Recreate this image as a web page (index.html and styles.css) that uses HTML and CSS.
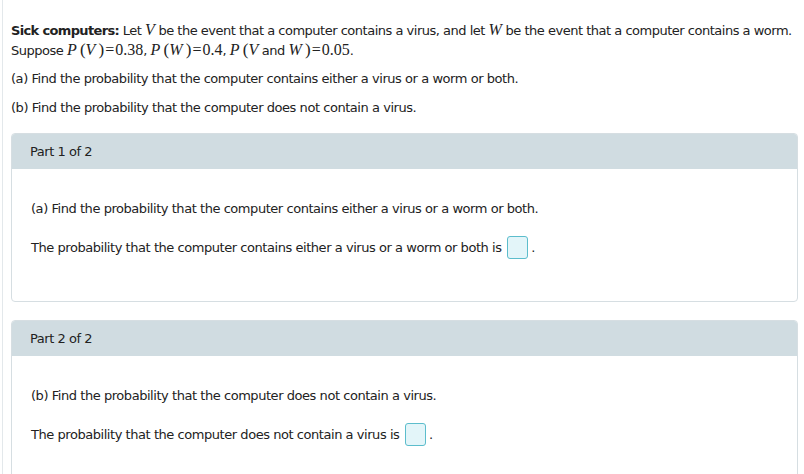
FILE: index.html
```html
<!DOCTYPE html>
<html>
<head>
<meta charset="utf-8">
<link rel="stylesheet" href="styles.css">
</head>
<body>
<div class="page">
  <div class="problem">
    <p class="intro"><b>Sick computers:</b> Let <span class="m i">V</span> be the event that a computer contains a virus, and let <span class="m i">W</span> be the event that a computer contains a worm.<br>Suppose <span class="m"><i>P</i>&thinsp;<span class="paren">(</span><i>V</i>&thinsp;<span class="paren">)</span><span class="eq">=</span>0.38</span>, <span class="m"><i>P</i>&thinsp;<span class="paren">(</span><i>W</i>&thinsp;<span class="paren">)</span><span class="eq">=</span>0.4</span>, <span class="m"><i>P</i>&thinsp;<span class="paren">(</span><i>V</i></span> and <span class="m"><i>W</i>&thinsp;<span class="paren">)</span><span class="eq">=</span>0.05</span>.</p>
    <p class="q">(a) Find the probability that the computer contains either a virus or a worm or both.</p>
    <p class="q">(b) Find the probability that the computer does not contain a virus.</p>
  </div>

  <section class="card">
    <div class="card-head">Part 1 of 2</div>
    <div class="card-body">
      <p class="q">(a) Find the probability that the computer contains either a virus or a worm or both.</p>
      <div class="answer">The probability that the computer contains either a virus or a worm or both is <span class="box"></span>.</div>
    </div>
  </section>

  <section class="card">
    <div class="card-head">Part 2 of 2</div>
    <div class="card-body">
      <p class="q">(b) Find the probability that the computer does not contain a virus.</p>
      <div class="answer">The probability that the computer does not contain a virus is <span class="box"></span>.</div>
    </div>
  </section>
</div>
</body>
</html>
```

FILE: styles.css
```css
html, body {
  margin: 0;
  padding: 0;
  background: #ffffff;
}
body {
  font-family: "DejaVu Sans", Verdana, sans-serif;
  font-size: 13px;
  letter-spacing: -0.45px;
  color: #222;
}
.page {
  margin-left: 2px;
  border-left: 1px solid #e3e8eb;
  padding: 21px 0 0 8px;
  min-height: 474px;
  box-sizing: border-box;
}
p {
  margin: 0;
  line-height: 20px;
}
.intro {
  margin-bottom: 8px;
  white-space: nowrap;
  letter-spacing: -0.49px;
}
.intro b {
  letter-spacing: -0.65px;
}
.problem .q {
  margin-bottom: 9px;
}
.problem {
  padding-bottom: 6px;
}
.m {
  font-family: "Liberation Serif", "Times New Roman", serif;
  font-size: 16px;
  letter-spacing: 0;
  line-height: 16px;
}
.i, .m i {
  font-style: italic;
}
.paren {
  font-size: 17px;
}
.eq {
  margin: 0 1px 0 1px;
}
.card {
  border: 1px solid #d6dee2;
  border-radius: 4px;
  margin-bottom: 18px;
  overflow: hidden;
  width: 785px;
}
.card-head {
  background: #d0dce1;
  height: 35px;
  line-height: 35px;
  padding-left: 18px;
}
.card-body {
  padding: 30px 19px 42px;
}
.card-body .q {
  margin-bottom: 16px;
}
.answer {
  display: flex;
  align-items: center;
  height: 24px;
  white-space: pre;
}
.box {
  display: inline-block;
  width: 19px;
  height: 21px;
  border: 1.5px solid #5cbdcc;
  border-radius: 3px;
  background: #e3f5f9;
  margin: 0 3px 0 2px;
}
```
